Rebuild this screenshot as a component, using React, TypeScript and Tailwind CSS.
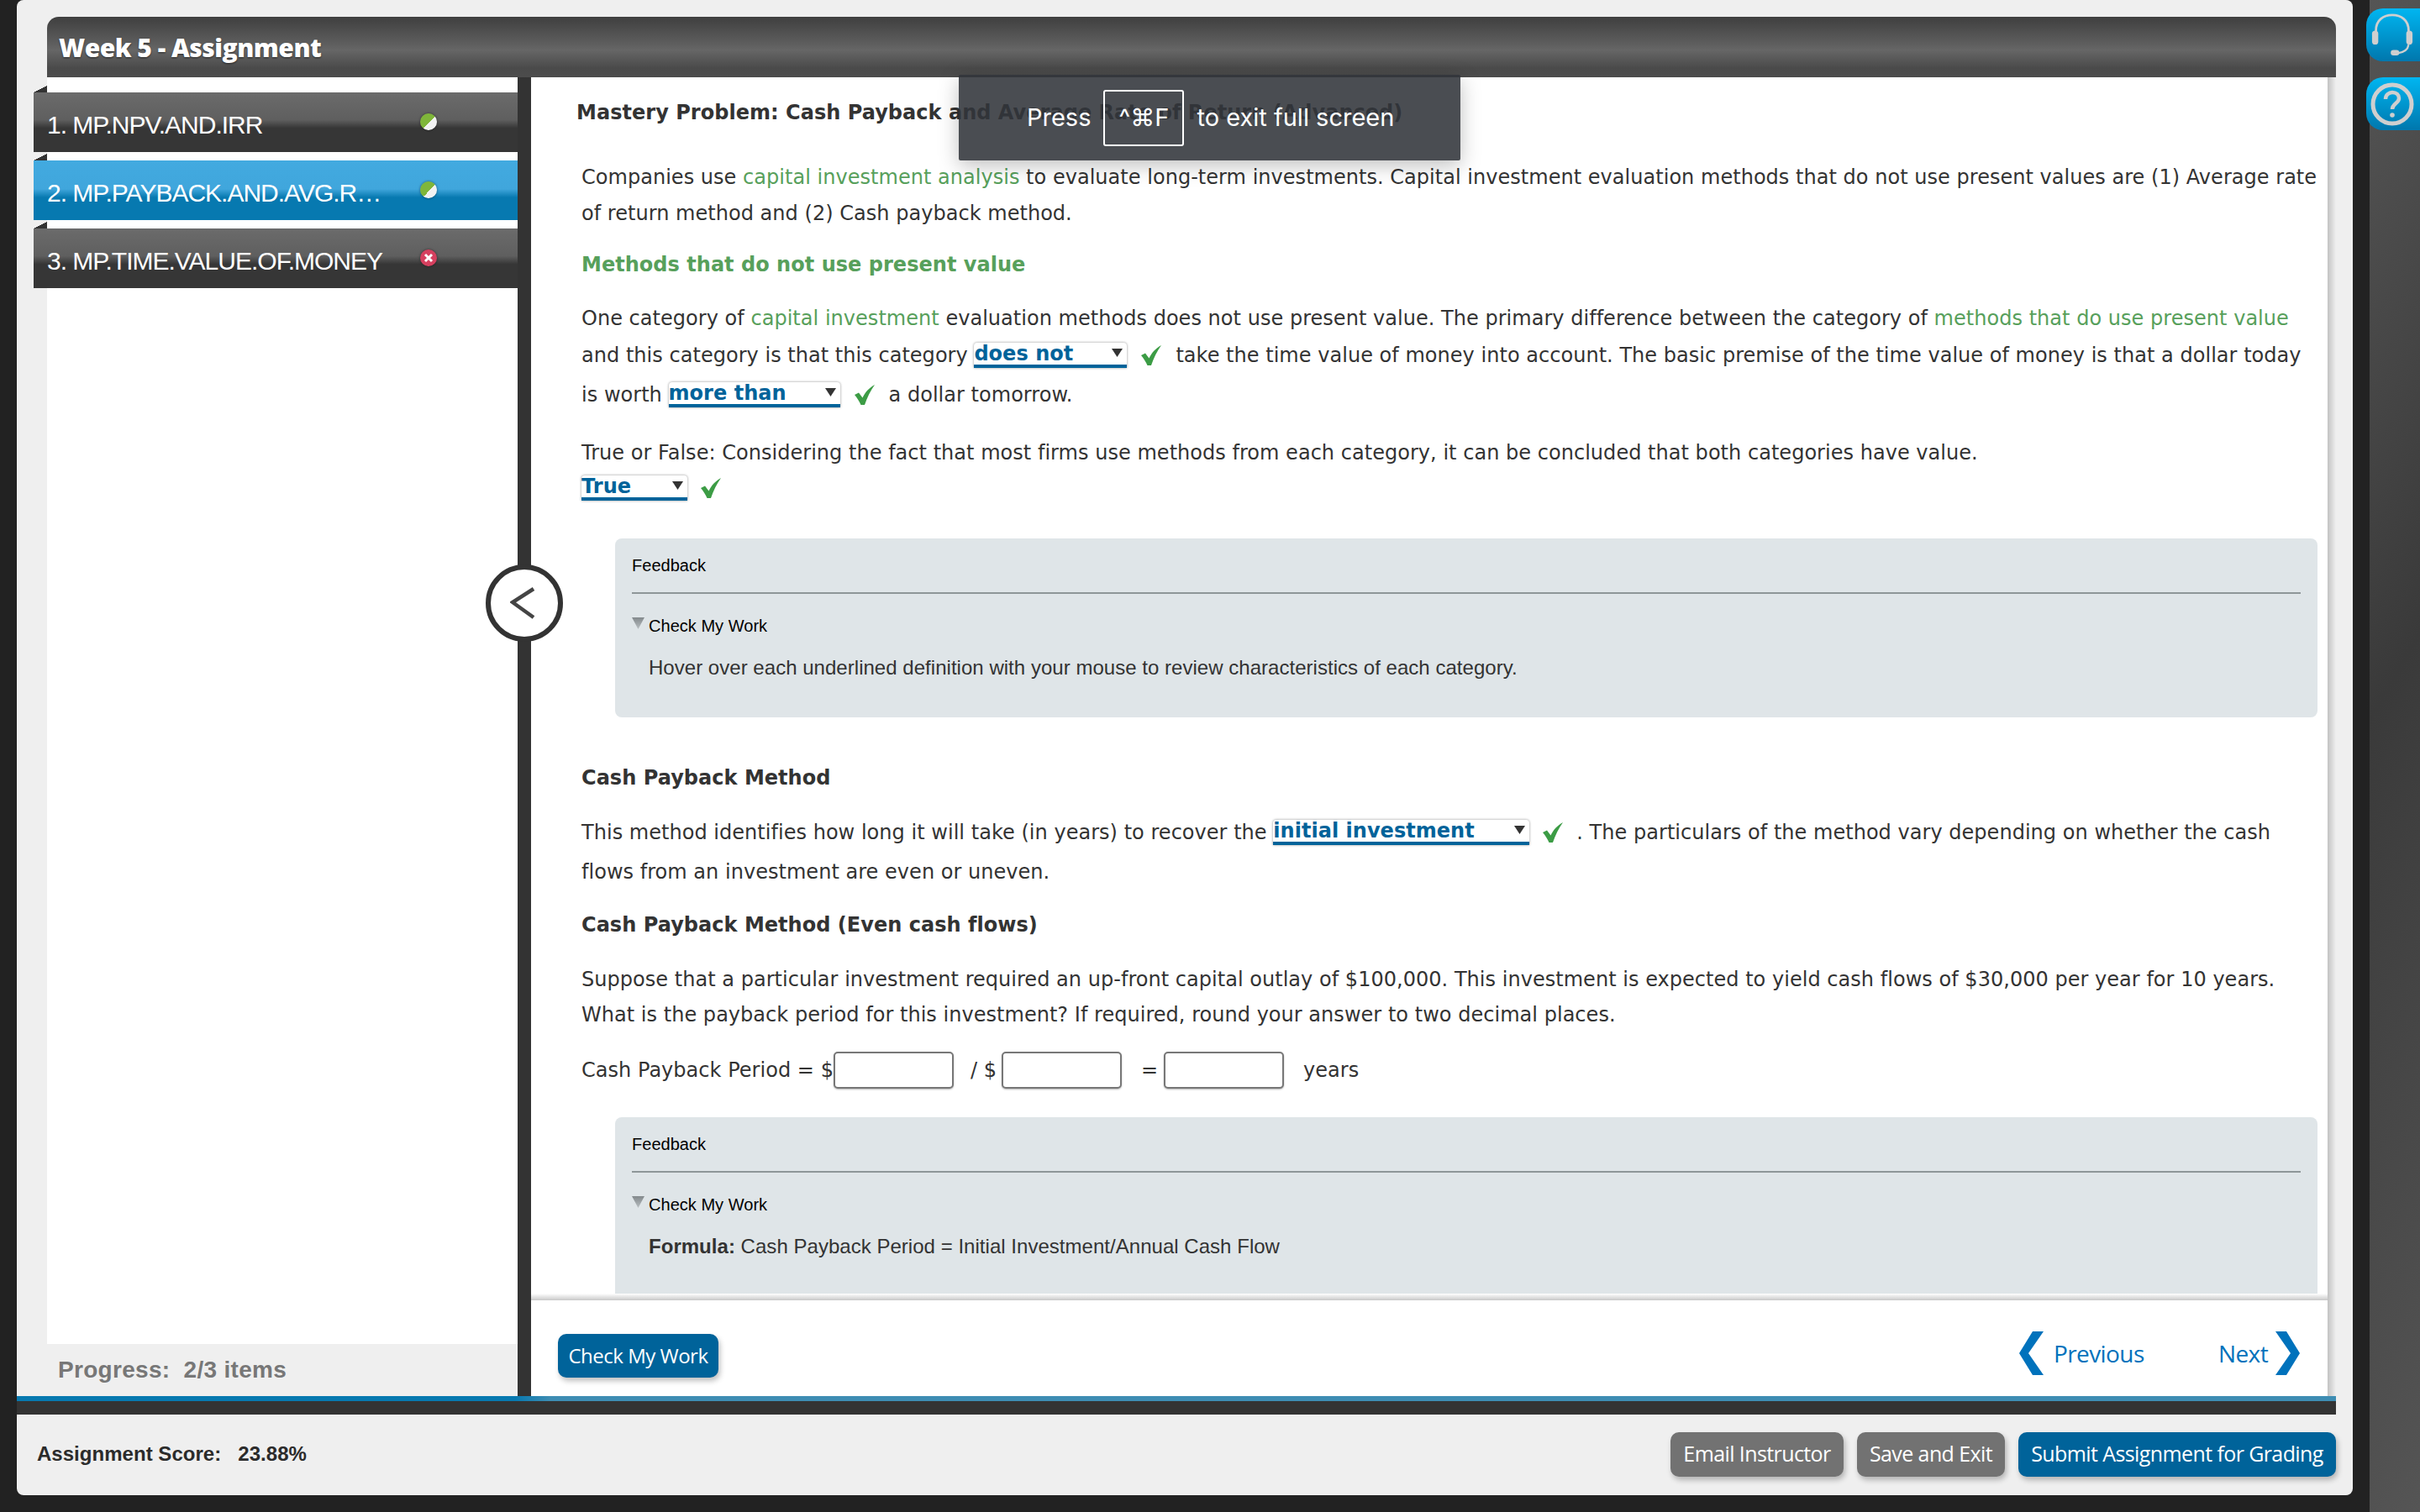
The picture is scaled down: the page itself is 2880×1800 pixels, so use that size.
import React from "react";

const Check = () => (
  <svg width="24" height="24" viewBox="0 0 24 24" className="shrink-0">
    <path d="M0 12 L5 9.5 L9.5 15.5 C12.5 9 17 4 24 0 C19 7 15 15 12 24 L7.5 24 C5.5 19.5 3 15.5 0 12 Z" fill="#3c9c45" />
  </svg>
);

const Sel = ({ text, w }: { text: string; w: string }) => (
  <span className={`${w} inline-flex h-[30px] items-center justify-between rounded-t-[4px] border-b-[4px] border-[#00639a] bg-white pr-[2px] font-bold leading-[24px] text-[#00639a] shadow-[0_0_3px_rgba(0,0,0,0.45)]`}>
    <span className="-mt-[1px]">{text}</span>
    <svg width="13" height="10" viewBox="0 0 13 10" className="-mt-[2px] mr-[3px]"><path d="M0 0 H13 L6.5 10 Z" fill="#333" /></svg>
  </span>
);

const Item = ({ n, active, bad }: { n: string; active?: boolean; bad?: boolean }) => (
  <div
    className={`relative -ml-[16px] flex h-[71px] w-[576px] items-center pl-[16px] font-['Liberation_Sans',sans-serif] text-[30px] tracking-[-1px] text-white ${
      active
        ? "bg-[linear-gradient(#42aae0_0%,#40a6dc_48%,#0779b0_62%,#0779b0_100%)]"
        : "bg-[linear-gradient(#6b6b6b_0%,#5f5f5f_46%,#363636_60%,#363636_100%)]"
    }`}
  >
    <span className="absolute -top-[8px] left-0 h-[8px] w-[16px] bg-[linear-gradient(to_bottom_right,transparent_50%,#333_50%)]" />
    <span className="block w-[415px] truncate pt-[5px]">{n}</span>
    <span className={`absolute left-[460px] top-[25px] flex h-[20px] w-[20px] items-center justify-center rounded-full shadow-[0_0_3px_rgba(0,0,0,0.5)] ${bad ? "bg-[#d6405f]" : "bg-[linear-gradient(135deg,#7fb63a_55%,#f2f2f2_55%)]"}`}>
      {bad && (
        <svg width="12" height="12" viewBox="0 0 12 12"><path d="M2 2 L10 10 M10 2 L2 10" stroke="#fff" strokeWidth="3" /></svg>
      )}
    </span>
  </div>
);

const Feedback = ({ children, h }: { children: React.ReactNode; h: string }) => (
  <div className={`${h} ml-[100px] mr-[12px] shrink-0 rounded-[8px] bg-[#dfe5e8] px-[20px] font-['Liberation_Sans',sans-serif]`}>
    <div className="flex h-[64px] items-center text-[20px] text-black">Feedback</div>
    <div className="h-[2px] bg-[#8e9698]" />
    <div className="mt-[22px] flex h-[32px] items-center text-[20px] text-black">
      <svg width="15" height="14" viewBox="0 0 15 14" className="-mt-[6px] mr-[5px]">
        <defs>
          <linearGradient id="tri" x1="0" y1="0" x2="0" y2="1"><stop offset="0" stopColor="#83898c" /><stop offset="1" stopColor="#b9bfc2" /></linearGradient>
        </defs>
        <path d="M0 0 H15 L7.5 14 Z" fill="url(#tri)" />
      </svg>
      Check My Work
    </div>
    <div className="mt-[18px] flex h-[32px] items-center pl-[20px] text-[24px] text-[#333]">{children}</div>
  </div>
);

const G = ({ children }: { children: React.ReactNode }) => <span className="text-[#57a05b]">{children}</span>;

const Input = () => (
  <span className="block h-[44px] w-[143px] shrink-0 rounded-[5px] border-[2px] border-[#777] bg-white shadow-[0_1px_2px_rgba(0,0,0,0.3)]" />
);

const Gray = ({ children, w }: { children: React.ReactNode; w: string }) => (
  <button className={`${w} flex h-[53px] items-center justify-center rounded-[10px] bg-[#727272] text-[25px] tracking-[-0.6px] text-white shadow-[2px_4px_6px_rgba(0,0,0,0.25)]`}>{children}</button>
);

export default function App() {
  return (
    <div className="relative flex h-[1800px] w-[2880px] overflow-hidden bg-[#222222] font-['DejaVu_Sans',sans-serif] text-[24px] tracking-[0.03px] text-[#333]">
      <div className="ml-[20px] flex h-[1780px] w-[2780px] shrink-0 flex-col rounded-b-[8px] rounded-t-[8px] bg-[#efefef]">
        {/* header */}
        <div className="ml-[36px] mt-[20px] flex h-[72px] w-[2724px] shrink-0 items-center rounded-t-[14px] bg-[linear-gradient(#3f3f3f_0%,#5e5e5e_45%,#666_55%,#4a4a4a_85%,#4c4c4c_100%)] pl-[14px] font-['Open_Sans',sans-serif] text-[30px] font-extrabold tracking-[-0.5px] text-white [text-shadow:0_1px_2px_rgba(0,0,0,0.6)]">
          Week 5 - Assignment
        </div>

        {/* middle */}
        <div className="flex h-[1570px] shrink-0">
          <div className="flex w-[596px] shrink-0 flex-col">
            <div className="ml-[36px] flex h-[1508px] flex-col gap-[10px] bg-white pt-[18px]">
              <Item n="1. MP.NPV.AND.IRR" />
              <Item n="2. MP.PAYBACK.AND.AVG.RATE.OF.RETURN" active />
              <Item n="3. MP.TIME.VALUE.OF.MONEY" bad />
            </div>
            <div className="flex h-[62px] items-center pl-[49px] font-['Liberation_Sans',sans-serif] text-[28px] font-bold tracking-[0.3px] text-[#777]">
              Progress:&nbsp; 2/3 items
            </div>
          </div>
          <div className="w-[16px] shrink-0 bg-[#333]" />
          <div className="flex w-[2138px] shrink-0 flex-col bg-white">
            <div className="h-[1448px] shrink-0 overflow-hidden whitespace-nowrap">
              <div className="flex flex-col">
                <div className="ml-[54px] mt-[20px] flex h-[44px] items-center font-bold">Mastery Problem: Cash Payback and Average Rate of Return (Advanced)</div>
                <div className="ml-[60px] mt-[33px] flex h-[43px] items-center">Companies use&nbsp;<G>capital investment analysis</G>&nbsp;to evaluate long-term investments. Capital investment evaluation methods that do not use present values are (1) Average rate</div>
                <div className="ml-[60px] flex h-[43px] items-center">of return method and (2) Cash payback method.</div>
                <div className="ml-[60px] mt-[18px] flex h-[44px] items-center font-bold text-[#57a05b]">Methods that do not use present value</div>
                <div className="ml-[60px] mt-[20px] flex h-[44px] items-center">One category of&nbsp;<G>capital investment</G>&nbsp;evaluation methods does not use present value. The primary difference between the category of&nbsp;<G>methods that do use present value</G></div>
                <div className="ml-[60px] flex h-[44px] items-center">and this category is that this category&nbsp;<Sel text="does not" w="w-[182px]" /><span className="ml-[17px] mr-[17px]"><Check /></span>take the time value of money into account. The basic premise of the time value of money is that a dollar today</div>
                <div className="ml-[60px] mt-[3px] flex h-[44px] items-center">is worth&nbsp;<Sel text="more than" w="w-[204px]" /><span className="ml-[17px] mr-[17px]"><Check /></span>a dollar tomorrow.</div>
                <div className="ml-[60px] mt-[26px] flex h-[42px] items-center">True or False: Considering the fact that most firms use methods from each category, it can be concluded that both categories have value.</div>
                <div className="ml-[60px] flex h-[42px] items-center"><Sel text="True" w="w-[126px]" /><span className="ml-[16px]"><Check /></span></div>
                <div className="mt-[39px]">
                  <Feedback h="h-[213px]">Hover over each underlined definition with your mouse to review characteristics of each category.</Feedback>
                </div>
                <div className="ml-[60px] mt-[50px] flex h-[44px] items-center font-bold">Cash Payback Method</div>
                <div className="ml-[60px] mt-[21px] flex h-[44px] items-center">This method identifies how long it will take (in years) to recover the&nbsp;<Sel text="initial investment" w="w-[305px]" /><span className="ml-[16px] mr-[16px]"><Check /></span>. The particulars of the method vary depending on whether the cash</div>
                <div className="ml-[60px] mt-[3px] flex h-[44px] items-center">flows from an investment are even or uneven.</div>
                <div className="ml-[60px] mt-[19px] flex h-[44px] items-center font-bold">Cash Payback Method (Even cash flows)</div>
                <div className="ml-[60px] mt-[22px] flex h-[42px] items-center">Suppose that a particular investment required an up-front capital outlay of $100,000. This investment is expected to yield cash flows of $30,000 per year for 10 years.</div>
                <div className="ml-[60px] flex h-[42px] items-center">What is the payback period for this investment? If required, round your answer to two decimal places.</div>
                <div className="ml-[60px] mt-[23px] flex h-[44px] items-center">
                  <span className="w-[300px]">Cash Payback Period = $</span>
                  <Input />
                  <span className="w-[57px] pl-[20px]">/ $</span>
                  <Input />
                  <span className="w-[50px] pl-[23px]">=</span>
                  <Input />
                  <span className="pl-[23px]">years</span>
                </div>
                <div className="mt-[34px]">
                  <Feedback h="h-[240px]"><b>Formula:</b>&nbsp;Cash Payback Period = Initial Investment/Annual Cash Flow</Feedback>
                </div>
              </div>
            </div>
            <div className="h-[8px] shrink-0 bg-[linear-gradient(transparent,#c8c8c8)]" />
            <div className="flex h-[114px] shrink-0 items-start justify-between font-['Open_Sans',sans-serif]">
              <button className="ml-[32px] mt-[40px] flex h-[52px] w-[191px] items-center justify-center rounded-[10px] bg-[#00639a] text-[24px] tracking-[-0.5px] text-white shadow-[2px_4px_6px_rgba(0,0,0,0.25)]">Check My Work</button>
              <div className="mr-[33px] mt-[37px] flex h-[52px] items-center text-[28px] tracking-[-0.6px] text-[#0072bc]">
                <svg width="29" height="52" viewBox="0 0 29 52"><path d="M29 0 L16 0 L0 26 L16 52 L29 52 L11 26 Z" fill="#0072bc" /></svg>
                <span className="ml-[12px] w-[196px]">Previous</span>
                <span className="w-[68px]">Next</span>
                <svg width="29" height="52" viewBox="0 0 29 52"><path d="M0 0 L13 0 L29 26 L13 52 L0 52 L18 26 Z" fill="#0072bc" /></svg>
              </div>
            </div>
          </div>
          <div className="w-[10px] shrink-0 bg-[linear-gradient(to_right,#c2c2c2,#efefef)]" />
        </div>

        {/* status lines */}
        <div className="ml-0 h-[6px] w-[2760px] shrink-0 bg-[linear-gradient(to_right,#0779b0_0%,#0779b0_21.5%,#3e8db3_23%,#3e8db3_100%)]" />
        <div className="h-[16px] w-[2760px] shrink-0 bg-[#333]" />

        {/* bottom bar */}
        <div className="flex h-[96px] w-[2760px] shrink-0 items-center justify-between pl-[24px]">
          <div className="-mt-[2px] font-['Liberation_Sans',sans-serif] text-[24px] font-bold text-[#2b2b2b]">Assignment Score:&nbsp;&nbsp; 23.88%</div>
          <div className="-mt-[2px] flex gap-[16px] font-['Open_Sans',sans-serif]">
            <Gray w="w-[206px]">Email Instructor</Gray>
            <Gray w="w-[176px]">Save and Exit</Gray>
            <button className="flex h-[53px] w-[378px] items-center justify-center rounded-[10px] bg-[#00639a] text-[25px] tracking-[-0.6px] text-white shadow-[2px_4px_6px_rgba(0,0,0,0.25)]">Submit Assignment for Grading</button>
          </div>
        </div>
      </div>

      {/* right strip */}
      <div className="ml-[20px] flex h-[1800px] flex-1 flex-col gap-[19px] bg-[linear-gradient(120deg,#555,#3a3a3a_45%,#555)] pt-[10px]">
        <div className="-ml-[4px] flex h-[63px] w-[64px] items-center justify-center rounded-l-[20px] bg-[linear-gradient(#00b6f1,#0077ad)]">
          <svg width="50" height="52" viewBox="0 0 54 56" fill="none" className="-ml-[2px]">
            <path d="M6 28 V22 C6 8 16 2 27 2 C38 2 48 8 48 22 V28" stroke="#cfcfcf" strokeWidth="3" />
            <rect x="1" y="22" width="8" height="18" rx="4" fill="#cfcfcf" />
            <rect x="45" y="22" width="8" height="18" rx="4" fill="#cfcfcf" />
            <path d="M48 40 C47 47 42 50 34 51" stroke="#cfcfcf" strokeWidth="2.5" />
            <rect x="25" y="47" width="11" height="7" rx="3.5" fill="#cfcfcf" />
          </svg>
        </div>
        <div className="-ml-[4px] flex h-[63px] w-[64px] items-center justify-center rounded-l-[20px] bg-[linear-gradient(#00b6f1,#0077ad)]">
          <svg width="52" height="52" viewBox="0 0 52 52" fill="none" className="-ml-[2px]">
            <circle cx="26" cy="26" r="23" stroke="#cfcfcf" strokeWidth="5" />
            <path d="M18 20 C18 15 22 12 26 12 C31 12 34 15 34 19 C34 25 26 25 26 32" stroke="#cfcfcf" strokeWidth="4.5" />
            <circle cx="26" cy="39" r="2.8" fill="#cfcfcf" />
          </svg>
        </div>
      </div>

      {/* collapse handle */}
      <div className="absolute left-[578px] top-[672px] flex h-[92px] w-[92px] items-center justify-center rounded-full border-[6px] border-[#333] bg-white">
        <svg width="30" height="38" viewBox="0 0 30 38" fill="none" className="-ml-[4px]"><path d="M28 2 L3 18 L28 36" stroke="#444" strokeWidth="4.5" /></svg>
      </div>

      {/* full screen notice */}
      <div className="absolute left-[1141px] top-[89px] flex h-[102px] w-[597px] items-center rounded-[2px] bg-[rgba(49,52,58,0.88)] pl-[81px] font-['Inter',sans-serif] text-[29px] tracking-normal text-white shadow-[0_6px_24px_rgba(0,0,0,0.25)]">
        Press
        <span className="mx-[15px] flex h-[67px] w-[96px] items-center justify-center rounded-[3px] border-[2px] border-white">^⌘F</span>
        to exit full screen
      </div>
    </div>
  );
}
